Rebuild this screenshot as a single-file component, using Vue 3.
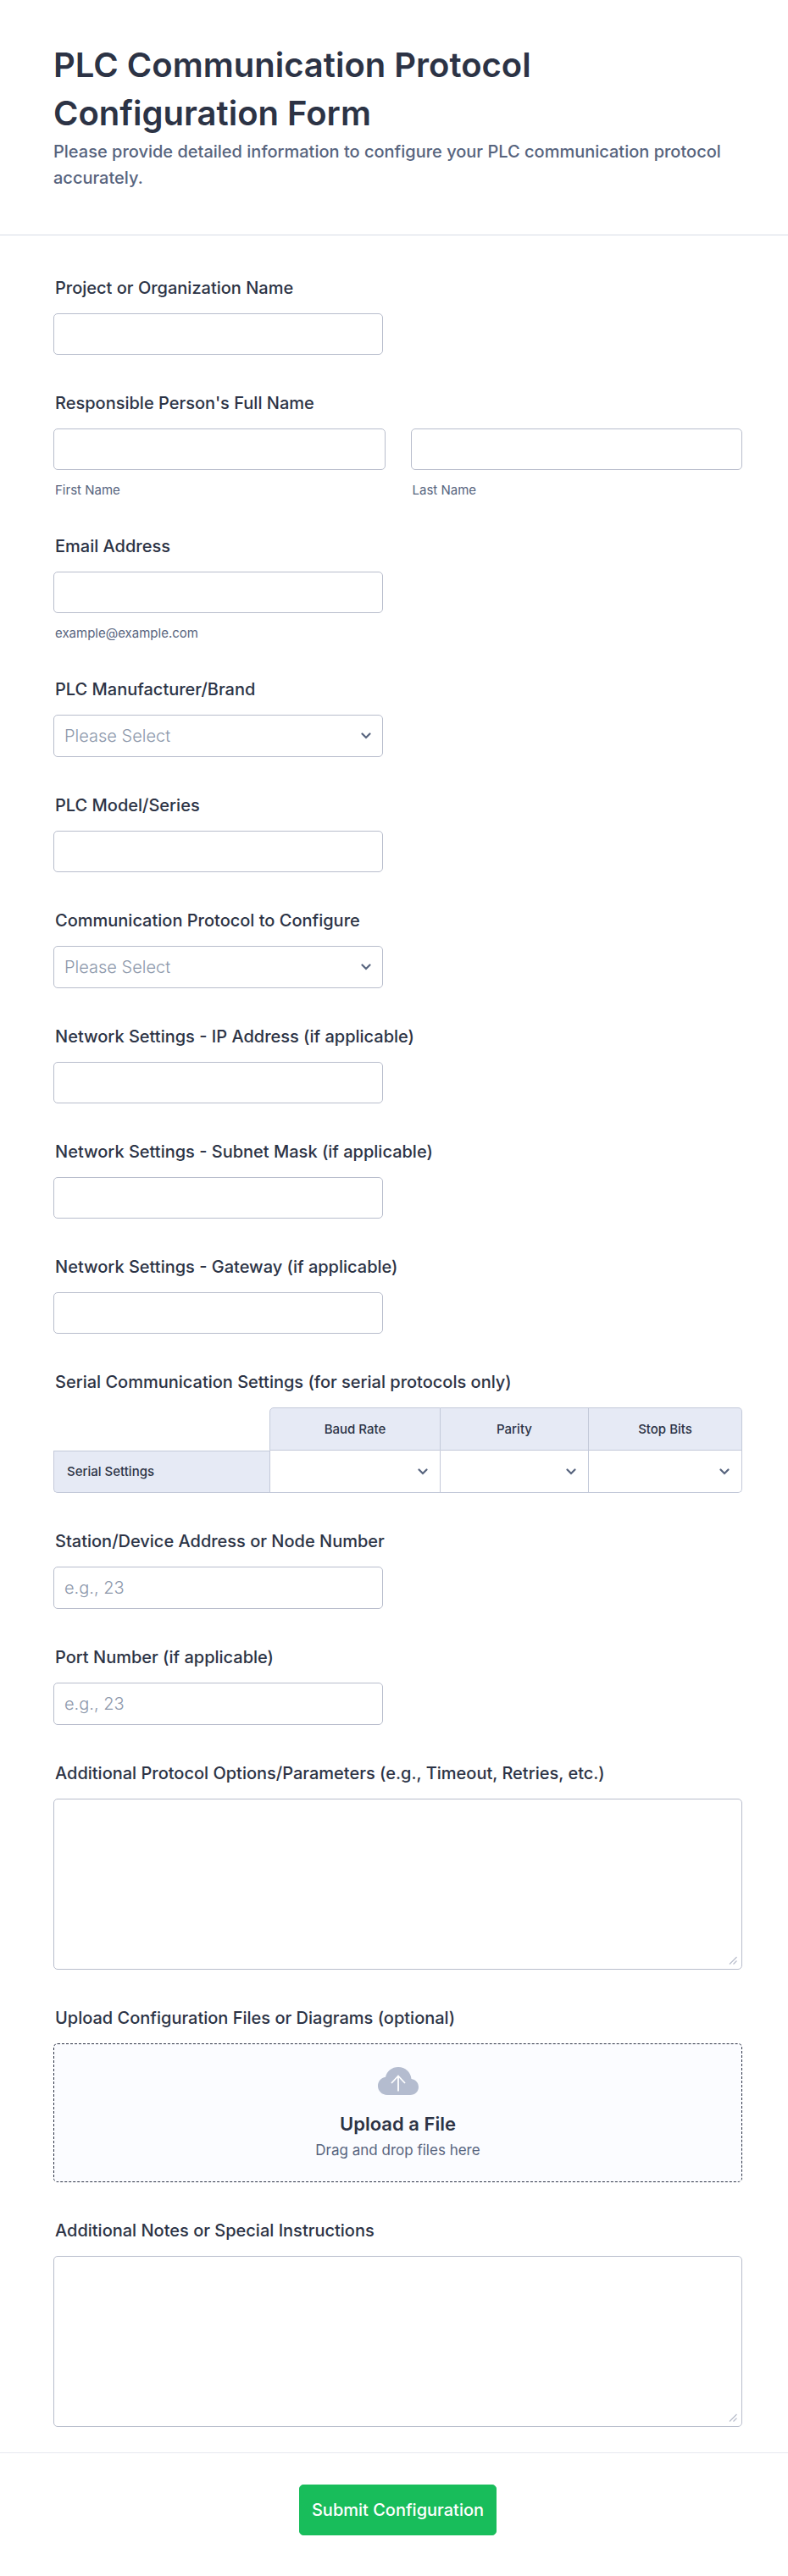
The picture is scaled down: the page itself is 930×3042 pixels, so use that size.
<template>
  <form class="form-page" @submit.prevent>
    <header class="form-header">
      <h1>PLC Communication Protocol Configuration Form</h1>
      <p>Please provide detailed information to configure your PLC communication protocol accurately.</p>
    </header>

    <div class="form-body">
      <div v-for="field in fields" :key="field.id" class="field">
        <component
          :is="field.target ? 'label' : 'div'"
          :id="field.id + '-label'"
          class="field-label"
          :for="field.target"
        >{{ field.label }}</component>

        <!-- First / last name -->
        <div v-if="field.type === 'name'" class="name-row" role="group" :aria-labelledby="field.id + '-label'">
          <div class="name-part">
            <input id="first-name" v-model="form.firstName" class="control" type="text">
            <label class="sub-label" for="first-name">First Name</label>
          </div>
          <div class="name-part">
            <input id="last-name" v-model="form.lastName" class="control" type="text">
            <label class="sub-label" for="last-name">Last Name</label>
          </div>
        </div>

        <!-- Dropdown -->
        <div v-else-if="field.type === 'select'" class="select-wrap half">
          <select :id="field.id" v-model="form[field.id]" class="control">
            <option value="">Please Select</option>
            <option v-for="option in field.options" :key="option">{{ option }}</option>
          </select>
          <svg class="chevron" viewBox="0 0 12 8" aria-hidden="true"><path d="M1.500 1.500 6 6l4.500-4.500" /></svg>
        </div>

        <!-- Serial settings matrix -->
        <table v-else-if="field.type === 'matrix'" class="matrix" :aria-labelledby="field.id + '-label'">
          <colgroup>
            <col>
            <col class="col-baud">
            <col class="col-parity">
            <col class="col-stop">
          </colgroup>
          <thead>
            <tr>
              <td></td>
              <th v-for="column in serialColumns" :key="column.id" scope="col">{{ column.label }}</th>
            </tr>
          </thead>
          <tbody>
            <tr>
              <th scope="row">Serial Settings</th>
              <td v-for="column in serialColumns" :key="column.id">
                <div class="select-wrap">
                  <select v-model="form[column.id]" :aria-label="column.label">
                    <option value=""></option>
                    <option v-for="option in column.options" :key="option">{{ option }}</option>
                  </select>
                  <svg class="chevron" viewBox="0 0 12 8" aria-hidden="true"><path d="M1.500 1.500 6 6l4.500-4.500" /></svg>
                </div>
              </td>
            </tr>
          </tbody>
        </table>

        <div v-else-if="field.type === 'textarea'" class="textarea-wrap">
          <textarea :id="field.id" v-model="form[field.id]" class="control"></textarea>
          <svg class="grip" viewBox="0 0 10 10" aria-hidden="true"><path d="M1 9.500 9.500 1M5.500 9.500 9.500 5.500" /></svg>
        </div>

        <!-- File upload -->
        <label v-else-if="field.type === 'upload'" class="upload">
          <input :id="field.id" class="upload-input" type="file" multiple :aria-labelledby="field.id + '-label'">
          <svg class="upload-icon" viewBox="0 0 48 33" aria-hidden="true">
            <path class="cloud" d="M11 33C4.800 33 0 28.300 0 22.300 0 16.800 3.800 12.500 9 11.700 10.500 4.800 16.500 0 24 0c8.300 0 14.800 6 15.500 14C44.500 14.700 48 18.600 48 23.500 48 28.900 43.700 33 38.200 33Z" />
            <path class="arrow" d="M24 28.500V11M16 19l8-8.500 8 8.500" />
          </svg>
          <span class="upload-title">Upload a File</span>
          <span class="upload-text">Drag and drop files here</span>
        </label>

        <template v-else>
          <input
            :id="field.id"
            v-model="form[field.id]"
            class="control half"
            :type="field.type"
            :placeholder="field.placeholder"
            :aria-describedby="field.hint ? field.id + '-hint' : null"
          >
          <span v-if="field.hint" :id="field.id + '-hint'" class="sub-label">{{ field.hint }}</span>
        </template>
      </div>
    </div>

    <footer class="form-footer">
      <button type="submit" class="submit-button">Submit Configuration</button>
    </footer>
  </form>
</template>

<script setup>
import { reactive } from 'vue'

const fields = [
  { id: 'project', type: 'text', label: 'Project or Organization Name', target: 'project' },
  { id: 'person', type: 'name', label: "Responsible Person's Full Name" },
  { id: 'email', type: 'email', label: 'Email Address', target: 'email', hint: 'example@example.com' },
  {
    id: 'brand',
    type: 'select',
    label: 'PLC Manufacturer/Brand',
    target: 'brand',
    options: ['Siemens', 'Allen-Bradley', 'Mitsubishi', 'Omron', 'Schneider Electric']
  },
  { id: 'model', type: 'text', label: 'PLC Model/Series', target: 'model' },
  {
    id: 'protocol',
    type: 'select',
    label: 'Communication Protocol to Configure',
    target: 'protocol',
    options: ['Modbus RTU', 'Modbus TCP', 'Profinet', 'EtherNet/IP']
  },
  { id: 'ip', type: 'text', label: 'Network Settings - IP Address (if applicable)', target: 'ip' },
  { id: 'subnet', type: 'text', label: 'Network Settings - Subnet Mask (if applicable)', target: 'subnet' },
  { id: 'gateway', type: 'text', label: 'Network Settings - Gateway (if applicable)', target: 'gateway' },
  { id: 'serial', type: 'matrix', label: 'Serial Communication Settings (for serial protocols only)' },
  {
    id: 'station',
    type: 'number',
    label: 'Station/Device Address or Node Number',
    target: 'station',
    placeholder: 'e.g., 23'
  },
  { id: 'port', type: 'number', label: 'Port Number (if applicable)', target: 'port', placeholder: 'e.g., 23' },
  {
    id: 'options',
    type: 'textarea',
    label: 'Additional Protocol Options/Parameters (e.g., Timeout, Retries, etc.)',
    target: 'options'
  },
  { id: 'files', type: 'upload', label: 'Upload Configuration Files or Diagrams (optional)', target: 'files' },
  { id: 'notes', type: 'textarea', label: 'Additional Notes or Special Instructions', target: 'notes' }
]

const serialColumns = [
  { id: 'baudRate', label: 'Baud Rate', options: ['9600', '19200', '38400', '115200'] },
  { id: 'parity', label: 'Parity', options: ['None', 'Even', 'Odd'] },
  { id: 'stopBits', label: 'Stop Bits', options: ['1', '2'] }
]

const form = reactive({
  project: '',
  firstName: '',
  lastName: '',
  email: '',
  brand: '',
  model: '',
  protocol: '',
  ip: '',
  subnet: '',
  gateway: '',
  baudRate: '',
  parity: '',
  stopBits: '',
  station: '',
  port: '',
  options: '',
  notes: ''
})
</script>

<style>
body {
  margin: 0;
  background: #fff;
}
</style>

<style scoped>
.form-page,
.form-page * {
  box-sizing: border-box;
}

.form-page {
  font-family: Inter, "Liberation Sans", sans-serif;
  font-size: 20px;
  line-height: 24px;
  color: #2c3345;
}

/* Header */
.form-header {
  padding: 48px 54px 51px 63px;
  border-bottom: 1px solid #d7dbe6;
}

.form-header h1 {
  margin: 0;
  font-size: 40px;
  font-weight: 600;
  line-height: 57px;
}

.form-header p {
  margin: 2px 0 0;
  font-weight: 500;
  line-height: 31px;
  color: #57647e;
}

/* Fields */
.form-body {
  display: flex;
  flex-direction: column;
  gap: 45px;
  padding: 50px 54px 30px 63px;
}

.field {
  display: flex;
  flex-direction: column;
}

.field-label {
  margin: 0 2px 18px;
  font-weight: 500;
}

.control {
  width: 100%;
  height: 49px;
  margin: 0;
  padding: 0 12px;
  border: 1px solid #b8bdcc;
  border-radius: 5px;
  background: #fff;
  font: inherit;
  color: inherit;
}

.half {
  width: 389px;
  max-width: 100%;
}

.control::placeholder {
  color: #8d98ab;
  font-weight: 300;
  opacity: 1;
}

input[type="number"].control {
  height: 50px;
  appearance: textfield;
}

.textarea-wrap {
  position: relative;
}

textarea.control {
  display: block;
  height: 202px;
  padding: 12px;
  resize: vertical;
}

textarea.control::-webkit-resizer {
  background: transparent;
}

.grip {
  position: absolute;
  right: 6px;
  bottom: 6px;
  width: 10px;
  height: 10px;
  fill: none;
  stroke: #b8bdcc;
  stroke-width: 1.2;
  pointer-events: none;
}

.name-row {
  display: grid;
  grid-template-columns: 1fr 1fr;
  gap: 30px;
}

.name-part {
  display: flex;
  flex-direction: column;
}

.sub-label {
  margin: 15px 2px 0;
  font-size: 15px;
  line-height: 18px;
  color: #57647e;
}

/* Dropdowns */
.select-wrap {
  position: relative;
}

.select-wrap select {
  display: block;
  height: 50px;
  appearance: none;
  color: #8d98ab;
  font-weight: 300;
}

.chevron {
  position: absolute;
  top: 50%;
  right: 14px;
  width: 12px;
  height: 8px;
  margin-top: -4px;
  fill: none;
  stroke: #57647e;
  stroke-width: 2.2;
  stroke-linecap: round;
  pointer-events: none;
}

/* Serial settings */
.matrix {
  width: 100%;
  table-layout: fixed;
  border-collapse: separate;
  border-spacing: 0;
  font-size: 15px;
  line-height: 18px;
}

.col-baud {
  width: 202px;
}

.col-parity {
  width: 175px;
}

.col-stop {
  width: 181px;
}

.matrix th,
.matrix td {
  height: 50px;
  padding: 0;
}

.matrix th {
  border: 1px solid #c3c9d9;
  background: #e6eaf5;
  font-weight: 500;
}

.matrix thead th {
  height: 51px;
  border-left: 0;
}

.matrix thead th:nth-child(2) {
  border-left: 1px solid #c3c9d9;
  border-radius: 5px 0 0 0;
}

.matrix thead th:last-child {
  border-radius: 0 5px 0 0;
}

.matrix tbody th {
  padding: 0 15px;
  border-right: 0;
  border-radius: 0 0 0 5px;
  text-align: left;
}

.matrix tbody td {
  border-right: 1px solid #c3c9d9;
  border-bottom: 1px solid #c3c9d9;
}

.matrix tbody td:nth-child(2) {
  border-left: 1px solid #c3c9d9;
}

.matrix tbody td:last-child {
  border-radius: 0 0 5px 0;
}

.matrix select {
  width: 100%;
  height: 49px;
  padding: 0 12px;
  border: 0;
  background: transparent;
  font: inherit;
}

/* Upload */
.upload {
  position: relative;
  display: flex;
  flex-direction: column;
  align-items: center;
  height: 164px;
  padding-top: 27px;
  border: 1px dashed #2c3345;
  border-radius: 5px;
  background: #fbfcff;
  cursor: pointer;
}

.upload-input {
  position: absolute;
  inset: 0;
  width: 100%;
  height: 100%;
  opacity: 0;
  cursor: pointer;
}

.upload-icon {
  width: 48px;
  height: 33px;
}

.cloud {
  fill: #b4bccf;
}

.arrow {
  fill: none;
  stroke: #fff;
  stroke-width: 1.8;
}

.upload-title {
  margin-top: 20px;
  font-size: 22px;
  font-weight: 600;
  line-height: 28px;
}

.upload-text {
  margin-top: 5px;
  font-size: 17px;
  line-height: 24px;
  color: #57647e;
}

/* Footer */
.form-footer {
  display: flex;
  justify-content: center;
  padding: 37px 54px 48px 63px;
  border-top: 1px solid #e6e8f0;
}

.submit-button {
  height: 60px;
  padding: 0 14px;
  border: 1px solid #18bd5b;
  border-radius: 5px;
  background: #18bd5b;
  font: inherit;
  font-weight: 500;
  color: #fff;
  cursor: pointer;
}
</style>
